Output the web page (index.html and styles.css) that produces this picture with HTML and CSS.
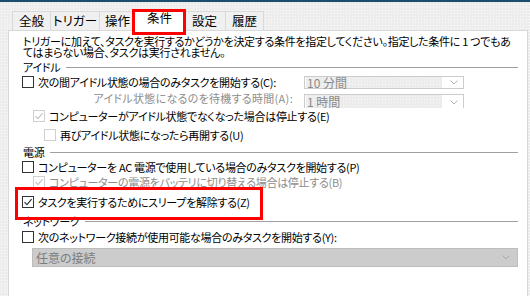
FILE: index.html
```
<!DOCTYPE html>
<html lang="ja">
<head>
<meta charset="utf-8">
<link rel="stylesheet" href="styles.css">
</head>
<body>
<div class="window">
  <div class="edge"></div>
  <div class="tabstrip">
    <div class="tab tab--general">全般</div>
    <div class="tab tab--trigger">トリガー</div>
    <div class="tab tab--action">操作</div>
    <div class="tab tab--active">条件</div>
    <div class="tab tab--settings">設定</div>
    <div class="tab tab--history">履歴</div>
  </div>
  <div class="panel">
    <p class="desc">トリガーに加えて、タスクを実行するかどうかを決定する条件を指定してください。指定した条件に 1 つでもあ<br>てはまらない場合、タスクは実行されません。</p>

    <div class="group group--idle"><span>アイドル</span></div>
    <div class="row row--c">
      <label class="check">
        <svg class="cb" viewBox="0 0 12 12" width="12" height="12"><rect x="0.5" y="0.5" width="11" height="11"/></svg>
        <span>次の間アイドル状態の場合のみタスクを開始する(C):</span>
      </label>
      <div class="combo"><span class="combo-field">10 分間</span><svg class="chev" viewBox="0 0 8 5" width="8" height="5"><polyline points="0.5,0.5 4,4 7.5,0.5"/></svg></div>
    </div>
    <div class="row row--a">
      <span class="label-right muted">アイドル状態になるのを待機する時間(A):</span>
      <div class="combo combo--open"><span class="combo-field">1 時間</span><svg class="chev" viewBox="0 0 8 5" width="8" height="5"><polyline points="0.5,0.5 4,4 7.5,0.5"/></svg></div>
    </div>
    <div class="row row--e indent1">
      <label class="check">
        <svg class="cb cb--disabled" viewBox="0 0 12 12" width="12" height="12"><rect x="0.5" y="0.5" width="11" height="11"/><polyline points="2.5,6.2 5,8.7 9.6,3.2"/></svg>
        <span>コンピューターがアイドル状態でなくなった場合は停止する(E)</span>
      </label>
    </div>
    <div class="row row--u indent2">
      <label class="check">
        <svg class="cb cb--disabled" viewBox="0 0 12 12" width="12" height="12"><rect x="0.5" y="0.5" width="11" height="11"/></svg>
        <span>再びアイドル状態になったら再開する(U)</span>
      </label>
    </div>

    <div class="group group--power"><span>電源</span></div>
    <div class="row row--p">
      <label class="check">
        <svg class="cb" viewBox="0 0 12 12" width="12" height="12"><rect x="0.5" y="0.5" width="11" height="11"/></svg>
        <span>コンピューターを AC 電源で使用している場合のみタスクを開始する(P)</span>
      </label>
    </div>
    <div class="row row--b indent1">
      <label class="check muted">
        <svg class="cb cb--disabled" viewBox="0 0 12 12" width="12" height="12"><rect x="0.5" y="0.5" width="11" height="11"/><polyline points="2.5,6.2 5,8.7 9.6,3.2"/></svg>
        <span>コンピューターの電源をバッテリに切り替える場合は停止する(B)</span>
      </label>
    </div>
    <div class="row row--z">
      <label class="check">
        <svg class="cb" viewBox="0 0 12 12" width="12" height="12"><rect x="0.5" y="0.5" width="11" height="11"/><polyline points="2.5,6.2 5,8.7 9.6,3.2"/></svg>
        <span>タスクを実行するためにスリープを解除する(Z)</span>
      </label>
    </div>

    <div class="group group--network"><span>ネットワーク</span></div>
    <div class="row row--y">
      <label class="check">
        <svg class="cb" viewBox="0 0 12 12" width="12" height="12"><rect x="0.5" y="0.5" width="11" height="11"/></svg>
        <span>次のネットワーク接続が使用可能な場合のみタスクを開始する(Y):</span>
      </label>
    </div>
    <div class="netcombo"><span>任意の接続</span><svg class="chev chev--net" viewBox="0 0 8 5" width="8" height="5"><polyline points="0.5,0.5 4,4 7.5,0.5"/></svg></div>
  </div>

  <div class="highlight highlight--tab"></div>
  <div class="highlight highlight--wake"></div>
</div>
</body>
</html>
```
FILE: styles.css
```
html, body {
  margin: 0;
  padding: 0;
}
body {
  width: 530px;
  height: 296px;
  overflow: hidden;
  font-family: "Noto Sans CJK JP", "Noto Sans", sans-serif;
  font-feature-settings: "palt";
  color: #000;
}
.window {
  position: relative;
  height: 296px;
  display: flex;
  flex-direction: column;
  background:
    radial-gradient(circle, #fbfbfb 0.7px, transparent 0.9px) 0 0 / 3px 3px,
    #ededed;
}
.edge {
  height: 2px;
  background: #1c4c6b;
  flex: none;
}
.tabstrip {
  flex: none;
  height: 28px;
  display: flex;
  align-items: flex-end;
  padding-left: 12px;
}
.tab {
  box-sizing: border-box;
  height: 19px;
  border: 1px solid #d9d9d9;
  border-bottom: none;
  margin-right: -1px;
  background: #f0f0f0;
  font-size: 12.5px;
  line-height: 17px;
  text-align: center;
}
.tab--general { width: 39px; }
.tab--trigger { width: 50px; }
.tab--action { width: 37px; }
.tab--settings { width: 43px; }
.tab--history { width: 39px; }
.tab--active {
  position: relative;
  z-index: 2;
  width: 53px;
  height: 22px;
  margin: 0 -3px -1px -2px;
  background: #fff;
  line-height: 16px;
}
.panel {
  flex: 1;
  margin: 0 2px 0 8px;
  border: 1px solid #d9d9d9;
  border-bottom: none;
  background: #fff;
  padding: 5px 9px 0 13px;
  font-size: 11px;
  letter-spacing: -0.3px;
  display: flex;
  flex-direction: column;
}
.desc {
  margin: 0;
  padding-left: 1px;
  line-height: 11px;
  white-space: nowrap;
}
.group {
  display: flex;
  align-items: center;
  padding-left: 1px;
  white-space: nowrap;
}
.group::after {
  content: "";
  flex: 1;
  border-top: 1px solid #a0a0a0;
  margin-left: 6px;
}
.group--idle { height: 16px; margin-top: 1px; }
.group--power { height: 16px; }
.group--network { height: 14px; }
.row {
  display: flex;
  align-items: center;
  white-space: nowrap;
}
.row--c { height: 14px; }
.row--a { height: 18px; align-items: flex-start; }
.row--e { height: 18px; }
.row--u { height: 19px; }
.row--p { height: 14px; }
.row--b { height: 16px; }
.row--z { height: 24px; }
.row--y { height: 18px; }
.indent1 { padding-left: 11px; }
.indent2 { padding-left: 22px; }
.check {
  display: flex;
  align-items: center;
  gap: 4px;
}
.row--c .check { width: 282px; }
.cb { flex: none; display: block; }
.cb rect { fill: #fff; stroke: #333; }
.cb polyline { fill: none; stroke: #333; stroke-width: 1.2; }
.cb--disabled rect { stroke: #cfcfcf; }
.cb--disabled polyline { stroke: #c4c4c4; }
.muted { color: #8d8d8d; }
.label-right {
  box-sizing: border-box;
  width: 282px;
  text-align: right;
  padding-right: 11px;
  line-height: 18px;
  letter-spacing: 0.3px;
}
.combo {
  box-sizing: border-box;
  width: 160px;
  height: 13px;
  border: 1px solid #cccccc;
  background: #fff;
  display: flex;
  align-items: center;
  padding: 0 5px 0 1px;
  flex: none;
  color: #8a8a8a;
  letter-spacing: 0;
}
.combo--open {
  margin-top: 5px;
  height: 14px;
  border-bottom: none;
  align-items: flex-start;
}
.combo-field {
  flex: 1;
  align-self: stretch;
  padding-left: 1px;
  margin-right: 8px;
  line-height: 11px;
  font-size: 12px;
  background:
    radial-gradient(circle, #f8f8f8 0.7px, transparent 0.9px) 0 0 / 3px 3px,
    #ececec;
}
.combo--open .combo-field { line-height: 13px; }
.chev { display: block; flex: none; }
.chev polyline { fill: none; stroke: #b4b4b4; stroke-width: 1; }
.combo--open .chev { margin-top: 5px; }
.netcombo {
  box-sizing: border-box;
  margin: 2px 0 0 10px;
  width: 486px;
  height: 19px;
  border: 1px solid #bdbdbd;
  background: #cccccc;
  color: #7d7d7d;
  font-size: 12px;
  letter-spacing: 0;
  display: flex;
  align-items: center;
  justify-content: space-between;
  padding: 0 7px 0 3px;
}
.chev--net polyline { stroke: #a9a9a9; }
.highlight {
  position: absolute;
  border: 3px solid #ff0000;
  box-sizing: border-box;
  z-index: 5;
}
.highlight--tab {
  left: 132px;
  top: 9px;
  width: 54px;
  height: 26px;
}
.highlight--wake {
  left: 15px;
  top: 187px;
  width: 248px;
  height: 33px;
}
```
